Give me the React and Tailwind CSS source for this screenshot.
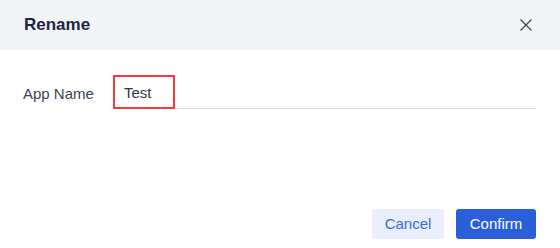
import React from "react";

export default function App() {
  return (
    <div
      className="w-[560px] h-[248px] bg-white flex flex-col"
      style={{ fontFamily: '"Liberation Sans", Arial, sans-serif' }}
    >
      <div className="h-[50px] bg-[#f2f3f7] flex items-center justify-between pl-[24px] pr-[28px]">
        <span className="text-[17px] font-bold text-[#1d2640]">Rename</span>
        <svg width="12" height="12" viewBox="0 0 12 12" className="text-[#3b3f4e]">
          <path d="M0.5 0.5 L11.5 11.5 M11.5 0.5 L0.5 11.5" stroke="currentColor" strokeWidth="1.2" fill="none" />
        </svg>
      </div>
      <div className="flex items-center pl-[23px] pr-[24px] pt-[25px]">
        <span className="w-[90px] text-[15px] text-[#3b4256] pt-[4px]">App Name</span>
        <div className="flex-1 relative h-[34px] border-b border-[#dcdcdc] flex items-center">
          <span className="pl-[11px] pt-[3px] text-[15px] text-[#2e3650]">Test</span>
          <div className="absolute left-0 top-0 w-[62px] h-[34px] border-2 border-[#f53a3a]" />
        </div>
      </div>
      <div className="flex-1" />
      <div className="flex justify-end gap-[12px] pr-[24px] pb-[9px]">
        <button className="w-[72px] h-[30px] rounded-[3px] bg-[#e8eefb] text-[#3a6bd6] text-[15px]">Cancel</button>
        <button className="w-[80px] h-[30px] rounded-[3px] bg-[#2b5fd9] text-white text-[15px]">Confirm</button>
      </div>
    </div>
  );
}
